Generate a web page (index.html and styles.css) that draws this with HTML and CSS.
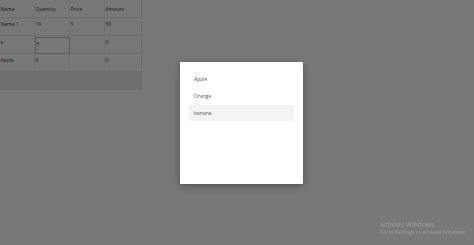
FILE: index.html
```html
<!DOCTYPE html>
<html>
<head>
<meta charset="utf-8">
<link rel="stylesheet" href="styles.css">
</head>
<body>
<div class="grid">
  <div class="row head">
    <div class="cell">Name</div>
    <div class="cell">Quantity</div>
    <div class="cell">Price</div>
    <div class="cell">Amount</div>
  </div>
  <div class="row">
    <div class="cell">Name 1</div>
    <div class="cell">10</div>
    <div class="cell">5</div>
    <div class="cell">50</div>
  </div>
  <div class="row">
    <div class="cell">a</div>
    <div class="cell editing">5</div>
    <div class="cell"></div>
    <div class="cell">0</div>
  </div>
  <div class="row">
    <div class="cell">Apple</div>
    <div class="cell">6</div>
    <div class="cell"></div>
    <div class="cell">0</div>
  </div>
  <div class="row foot">
    <div class="cell"></div>
    <div class="cell"></div>
    <div class="cell"></div>
    <div class="cell"></div>
  </div>
</div>

<div class="overlay">
  <div class="dialog">
    <ul class="list">
      <li class="item">Apple</li>
      <li class="item">Orange</li>
      <li class="item hover">banana</li>
    </ul>
  </div>
</div>

<div class="watermark">
  <div class="wm-title">Activate Windows</div>
  <div class="wm-sub">Go to Settings to activate Windows.</div>
</div>
</body>
</html>
```
FILE: styles.css
```css
html, body {
  margin: 0;
  padding: 0;
  background: #ffffff;
  font-family: "Open Sans", "Noto Sans", sans-serif;
  width: 474px;
  height: 245px;
  overflow: hidden;
}

.grid {
  width: 141px;
  border-right: 1px solid #e6e6e6;
  font-size: 5px;
  color: #3a3a3a;
}

.row {
  display: grid;
  grid-template-columns: 35px 35px 35px 35px;
  height: 17px;
  border-bottom: 1px solid #e6e6e6;
}

.cell {
  border-right: 1px solid #ededed;
  padding: 2px 0 0 0.5px;
  line-height: 6px;
  box-sizing: border-box;
}

.row .cell:last-child {
  border-right: none;
}

.head .cell {
  font-weight: 500;
  padding-top: 6px;
}

.row:not(.head) .cell {
  padding-top: 3px;
}

.cell.editing {
  border: 1px solid #c4c4c4;
  margin: 1px 0 -1px 0;
}

.foot {
  background: #ececec;
  border-bottom: none;
  height: 18px;
}

.overlay {
  position: fixed;
  inset: 0;
  background: rgba(0, 0, 0, 0.53);
  display: flex;
  align-items: center;
  justify-content: center;
  padding-left: 9px;
  box-sizing: border-box;
}

.dialog {
  width: 123px;
  height: 122px;
  background: #fff;
  border-radius: 1px;
  box-shadow: 0 2px 8px rgba(0, 0, 0, 0.35);
  box-sizing: border-box;
  padding: 9px 9px;
}

.list {
  list-style: none;
  margin: 0;
  padding: 0;
}

.item {
  height: 17px;
  line-height: 17px;
  padding-left: 5px;
  font-size: 5px;
  color: #555;
}

.item.hover {
  background: #f3f3f3;
  height: 16px;
}

.watermark {
  position: fixed;
  left: 380px;
  top: 221px;
  color: #a0a0a0;
}

.wm-title {
  font-size: 6.6px;
  line-height: 8px;
}

.wm-sub {
  font-size: 5.3px;
  line-height: 7px;
}
```
